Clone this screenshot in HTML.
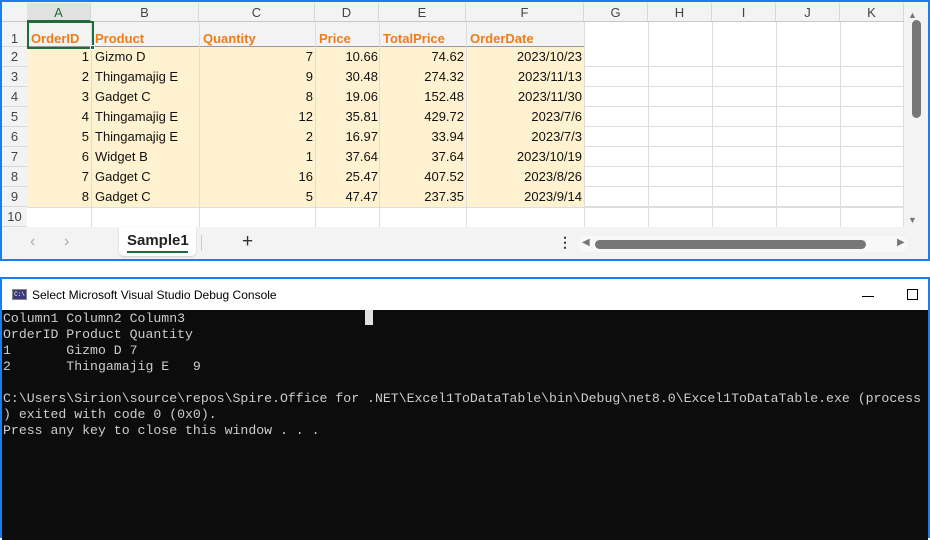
<!DOCTYPE html>
<html><head><meta charset="utf-8"><style>
*{margin:0;padding:0;box-sizing:border-box}
body{width:930px;height:538px;background:#fff;position:relative;overflow:hidden;font-family:"Liberation Sans",sans-serif}
.top{position:absolute;left:0;top:0;width:930px;height:261px;border:2px solid #1a7ef2;background:#f3f3f3;overflow:hidden}
.abs{position:absolute}
.ch{position:absolute;top:1px;height:19px;font-size:13px;color:#444;text-align:center;line-height:20px;border-right:1px solid #d8d8d8}
.rh{position:absolute;left:0;width:25px;font-size:13px;color:#444;text-align:center;border-bottom:1px solid #d8d8d8}
.c{position:absolute;font-size:13px;color:#111;white-space:nowrap;line-height:20px}
.h{color:#f07c14;font-weight:bold;font-size:13px}
.con{position:absolute;left:0;top:277px;width:930px;height:261px;border:2px solid #1a7ef2;border-bottom:none;background:#fff}
pre{font-family:"Liberation Mono",monospace;font-size:13.2px;line-height:16px;color:#cccccc}
</style></head><body>
<div class="top">
  <div class="abs" style="left:25px;top:19px;width:877px;height:206px;background:#fff"></div>
  <div class="abs" style="left:25px;top:19px;width:557px;height:26px;background:#f3f3f3;border-bottom:1px solid #999"></div>
  <div class="abs" style="left:25px;top:45px;width:557px;height:160px;background:#fff2d0"></div>
  <div class="ch" style="left:25px;width:64px;background:#e1e1e1;color:#1e6b3c;border-bottom:2px solid #1e6b3c;height:19px">A</div>
  <div class="ch" style="left:89px;width:108px">B</div>
  <div class="ch" style="left:197px;width:116px">C</div>
  <div class="ch" style="left:313px;width:64px">D</div>
  <div class="ch" style="left:377px;width:87px">E</div>
  <div class="ch" style="left:464px;width:118px">F</div>
  <div class="ch" style="left:582px;width:64px">G</div>
  <div class="ch" style="left:646px;width:64px">H</div>
  <div class="ch" style="left:710px;width:64px">I</div>
  <div class="ch" style="left:774px;width:64px">J</div>
  <div class="ch" style="left:838px;width:64px">K</div>
  <div class="abs" style="left:0;top:19px;width:902px;height:1px;background:#c8c8c8"></div>
  <div class="abs" style="left:89px;top:20px;width:1px;height:205px;background:#ddd"></div>
  <div class="abs" style="left:197px;top:20px;width:1px;height:205px;background:#ddd"></div>
  <div class="abs" style="left:313px;top:20px;width:1px;height:205px;background:#ddd"></div>
  <div class="abs" style="left:377px;top:20px;width:1px;height:205px;background:#ddd"></div>
  <div class="abs" style="left:464px;top:20px;width:1px;height:205px;background:#ddd"></div>
  <div class="abs" style="left:582px;top:20px;width:1px;height:205px;background:#ddd"></div>
  <div class="abs" style="left:646px;top:20px;width:1px;height:205px;background:#ddd"></div>
  <div class="abs" style="left:710px;top:20px;width:1px;height:205px;background:#ddd"></div>
  <div class="abs" style="left:774px;top:20px;width:1px;height:205px;background:#ddd"></div>
  <div class="abs" style="left:838px;top:20px;width:1px;height:205px;background:#ddd"></div>
  <div class="abs" style="left:901px;top:20px;width:1px;height:205px;background:#ddd"></div>
  <div class="abs" style="left:582px;top:45px;width:320px;height:160px;background:repeating-linear-gradient(to bottom,transparent 0,transparent 19px,#ddd 19px,#ddd 20px)"></div>
  <div class="abs" style="left:25px;top:205px;width:877px;height:1px;background:#ddd"></div>
  <div class="rh" style="top:20px;height:25px;line-height:34px">1</div>
  <div class="rh" style="top:45px;height:20px;line-height:20px">2</div>
  <div class="rh" style="top:65px;height:20px;line-height:20px">3</div>
  <div class="rh" style="top:85px;height:20px;line-height:20px">4</div>
  <div class="rh" style="top:105px;height:20px;line-height:20px">5</div>
  <div class="rh" style="top:125px;height:20px;line-height:20px">6</div>
  <div class="rh" style="top:145px;height:20px;line-height:20px">7</div>
  <div class="rh" style="top:165px;height:20px;line-height:20px">8</div>
  <div class="rh" style="top:185px;height:20px;line-height:20px">9</div>
  <div class="rh" style="top:205px;height:20px;line-height:20px">10</div>
  <div class="abs" style="left:25px;top:19px;width:67px;height:28px;border:2px solid #1e6b3c"></div>
  <div class="abs" style="left:88px;top:43px;width:5px;height:5px;background:#1e6b3c;border:1px solid #fff"></div>
  <div class="c h" style="left:29px;top:27px">OrderID</div>
  <div class="c h" style="left:93px;top:27px">Product</div>
  <div class="c h" style="left:201px;top:27px">Quantity</div>
  <div class="c h" style="left:317px;top:27px">Price</div>
  <div class="c h" style="left:381px;top:27px">TotalPrice</div>
  <div class="c h" style="left:468px;top:27px">OrderDate</div>
  <div class="abs" style="left:0;top:45px">
  <div class="c" style="left:25px;top:0;width:62px;text-align:right">1</div><div class="c" style="left:93px;top:0">Gizmo D</div><div class="c" style="left:197px;top:0;width:114px;text-align:right">7</div><div class="c" style="left:313px;top:0;width:63px;text-align:right">10.66</div><div class="c" style="left:377px;top:0;width:85px;text-align:right">74.62</div><div class="c" style="left:464px;top:0;width:116px;text-align:right">2023/10/23</div>
  <div class="c" style="left:25px;top:20px;width:62px;text-align:right">2</div><div class="c" style="left:93px;top:20px">Thingamajig E</div><div class="c" style="left:197px;top:20px;width:114px;text-align:right">9</div><div class="c" style="left:313px;top:20px;width:63px;text-align:right">30.48</div><div class="c" style="left:377px;top:20px;width:85px;text-align:right">274.32</div><div class="c" style="left:464px;top:20px;width:116px;text-align:right">2023/11/13</div>
  <div class="c" style="left:25px;top:40px;width:62px;text-align:right">3</div><div class="c" style="left:93px;top:40px">Gadget C</div><div class="c" style="left:197px;top:40px;width:114px;text-align:right">8</div><div class="c" style="left:313px;top:40px;width:63px;text-align:right">19.06</div><div class="c" style="left:377px;top:40px;width:85px;text-align:right">152.48</div><div class="c" style="left:464px;top:40px;width:116px;text-align:right">2023/11/30</div>
  <div class="c" style="left:25px;top:60px;width:62px;text-align:right">4</div><div class="c" style="left:93px;top:60px">Thingamajig E</div><div class="c" style="left:197px;top:60px;width:114px;text-align:right">12</div><div class="c" style="left:313px;top:60px;width:63px;text-align:right">35.81</div><div class="c" style="left:377px;top:60px;width:85px;text-align:right">429.72</div><div class="c" style="left:464px;top:60px;width:116px;text-align:right">2023/7/6</div>
  <div class="c" style="left:25px;top:80px;width:62px;text-align:right">5</div><div class="c" style="left:93px;top:80px">Thingamajig E</div><div class="c" style="left:197px;top:80px;width:114px;text-align:right">2</div><div class="c" style="left:313px;top:80px;width:63px;text-align:right">16.97</div><div class="c" style="left:377px;top:80px;width:85px;text-align:right">33.94</div><div class="c" style="left:464px;top:80px;width:116px;text-align:right">2023/7/3</div>
  <div class="c" style="left:25px;top:100px;width:62px;text-align:right">6</div><div class="c" style="left:93px;top:100px">Widget B</div><div class="c" style="left:197px;top:100px;width:114px;text-align:right">1</div><div class="c" style="left:313px;top:100px;width:63px;text-align:right">37.64</div><div class="c" style="left:377px;top:100px;width:85px;text-align:right">37.64</div><div class="c" style="left:464px;top:100px;width:116px;text-align:right">2023/10/19</div>
  <div class="c" style="left:25px;top:120px;width:62px;text-align:right">7</div><div class="c" style="left:93px;top:120px">Gadget C</div><div class="c" style="left:197px;top:120px;width:114px;text-align:right">16</div><div class="c" style="left:313px;top:120px;width:63px;text-align:right">25.47</div><div class="c" style="left:377px;top:120px;width:85px;text-align:right">407.52</div><div class="c" style="left:464px;top:120px;width:116px;text-align:right">2023/8/26</div>
  <div class="c" style="left:25px;top:140px;width:62px;text-align:right">8</div><div class="c" style="left:93px;top:140px">Gadget C</div><div class="c" style="left:197px;top:140px;width:114px;text-align:right">5</div><div class="c" style="left:313px;top:140px;width:63px;text-align:right">47.47</div><div class="c" style="left:377px;top:140px;width:85px;text-align:right">237.35</div><div class="c" style="left:464px;top:140px;width:116px;text-align:right">2023/9/14</div>
  </div>
  <div class="abs" style="left:906px;top:8px;color:#777;font-size:9px">▲</div>
  <div class="abs" style="left:910px;top:18px;width:9px;height:98px;background:#777;border-radius:5px"></div>
  <div class="abs" style="left:906px;top:213px;color:#777;font-size:9px">▼</div>
  <div class="abs" style="left:28px;top:231px;color:#aaa;font-size:16px">‹</div>
  <div class="abs" style="left:62px;top:231px;color:#aaa;font-size:16px">›</div>
  <div class="abs" style="left:117px;top:225px;width:77px;height:29px;background:#fff;border-radius:0 0 5px 5px;box-shadow:0 1px 2px #ccc"></div>
  <div class="abs" style="left:125px;top:230px;font-size:15px;font-weight:bold;color:#222">Sample1</div>
  <div class="abs" style="left:125px;top:249px;width:61px;height:2px;background:#1e6b3c"></div>
  <div class="abs" style="left:199px;top:233px;width:1px;height:16px;background:#ccc"></div>
  <div class="abs" style="left:240px;top:229px;font-size:19px;color:#333">+</div>
  <div class="abs" style="left:556px;top:232px;font-size:14px;color:#333;font-weight:bold">⋮</div>
  <div class="abs" style="left:576px;top:234px;width:330px;height:16px;background:#f8f8f8;border-radius:8px"></div>
  <div class="abs" style="left:580px;top:235px;color:#777;font-size:10px">◀</div>
  <div class="abs" style="left:593px;top:238px;width:271px;height:9px;background:#777;border-radius:5px"></div>
  <div class="abs" style="left:895px;top:235px;color:#777;font-size:10px">▶</div>
</div>

<div class="con">
  <div class="abs" style="left:10px;top:10px;width:15px;height:11px;background:#3a3a7a;border:1px solid #888;font-size:6px;color:#fff;line-height:9px;text-align:center;font-family:'Liberation Mono'">C:\</div>
  <div class="abs" style="left:30px;top:9px;font-size:12px;color:#000">Select Microsoft Visual Studio Debug Console</div>
  <div class="abs" style="left:860px;top:17px;width:12px;height:1px;background:#000"></div>
  <div class="abs" style="left:905px;top:10px;width:11px;height:11px;border:1px solid #000"></div>
  <div class="abs" style="left:0;top:31px;width:926px;height:230px;background:#0c0c0c;overflow:hidden">
<pre style="padding:1px 0 0 1px;white-space:pre">Column1 Column2 Column3
OrderID Product Quantity
1       Gizmo D 7
2       Thingamajig E   9

C:\Users\Sirion\source\repos\Spire.Office for .NET\Excel1ToDataTable\bin\Debug\net8.0\Excel1ToDataTable.exe (process 2
) exited with code 0 (0x0).
Press any key to close this window . . .</pre>
  <div class="abs" style="left:363px;top:0;width:8px;height:15px;background:#e0e0e0"></div>
  </div>
</div>
</body></html>
